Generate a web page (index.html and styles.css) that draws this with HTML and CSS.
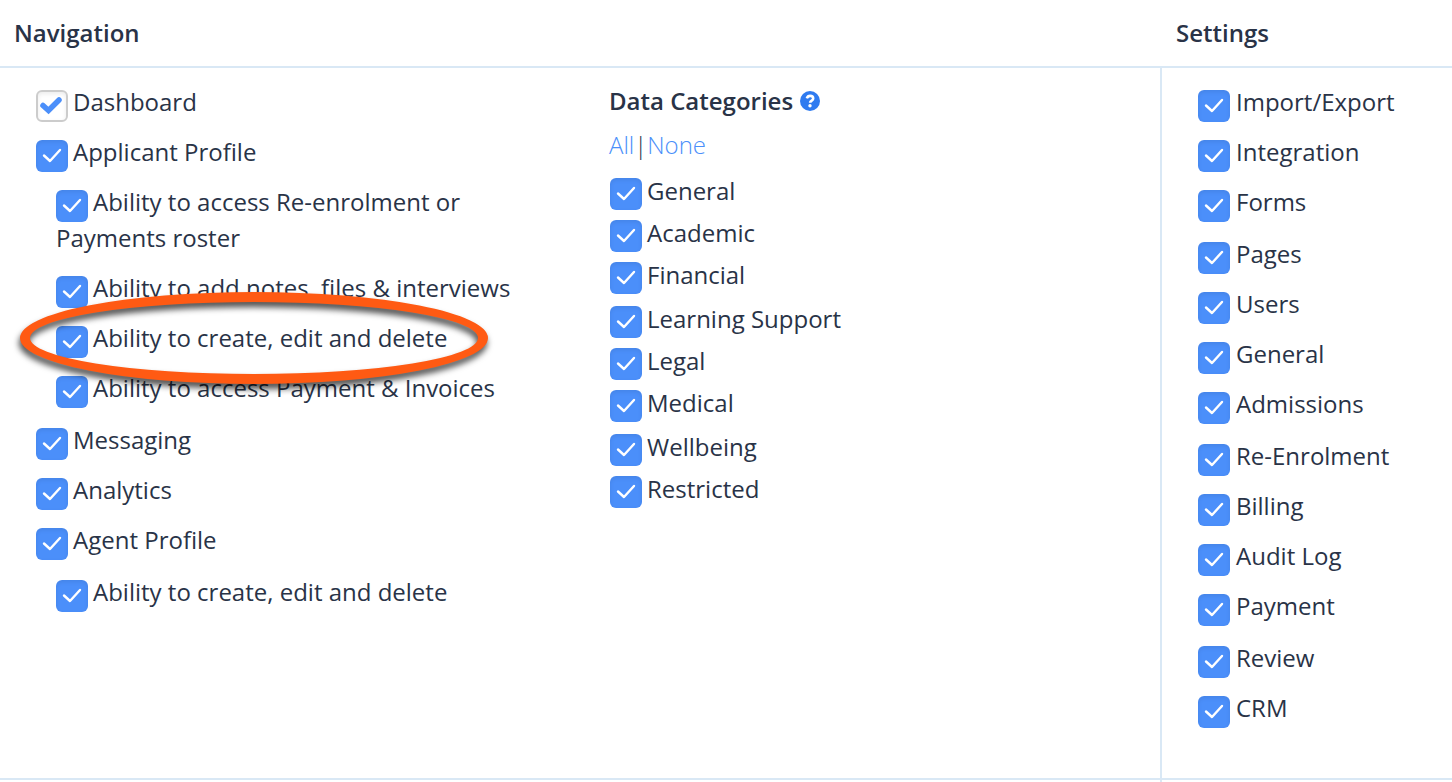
FILE: index.html
```html
<!DOCTYPE html>
<html lang="en">
<head>
<meta charset="utf-8">
<title>Permissions</title>
<link rel="stylesheet" href="styles.css">
</head>
<body>
<main class="permissions">
  <h2 class="heading">Navigation</h2>
  <h2 class="heading">Settings</h2>

  <div class="panel panel-split">
    <ul class="options options-nav">
      <li><label><input type="checkbox" class="check check-locked" checked>Dashboard</label></li>
      <li><label><input type="checkbox" class="check" checked>Applicant Profile</label></li>
      <li class="sub"><label><input type="checkbox" class="check" checked>Ability to access Re-enrolment or Payments roster</label></li>
      <li class="sub"><label><input type="checkbox" class="check" checked>Ability to add notes, files &amp; interviews</label></li>
      <li class="sub marked"><label><input type="checkbox" class="check" checked>Ability to create, edit and delete</label><span class="marker"></span></li>
      <li class="sub"><label><input type="checkbox" class="check" checked>Ability to access Payment &amp; Invoices</label></li>
      <li><label><input type="checkbox" class="check" checked>Messaging</label></li>
      <li><label><input type="checkbox" class="check" checked>Analytics</label></li>
      <li><label><input type="checkbox" class="check" checked>Agent Profile</label></li>
      <li class="sub"><label><input type="checkbox" class="check" checked>Ability to create, edit and delete</label></li>
    </ul>

    <section class="categories">
      <h3 class="categories-title">Data Categories
        <button type="button" class="help" aria-label="About data categories">
          <svg viewBox="0 0 20 20" width="20" height="20" aria-hidden="true">
            <circle cx="10" cy="10" r="10" fill="#2f7bf0"/>
            <path d="M6.800 7.400C7.400 5.600 8.600 4.900 10.100 4.900C11.900 4.900 13.200 6 13.200 7.500C13.200 9.600 10.100 9.600 10.100 11.800" fill="none" stroke="#fff" stroke-width="2.600"/>
            <circle cx="10" cy="14.700" r="1.700" fill="#fff"/>
          </svg>
        </button>
      </h3>
      <p class="bulk"><a href="#all">All</a><span class="bar">|</span><a href="#none">None</a></p>
      <ul class="options options-compact">
        <li><label><input type="checkbox" class="check" checked>General</label></li>
        <li><label><input type="checkbox" class="check" checked>Academic</label></li>
        <li><label><input type="checkbox" class="check" checked>Financial</label></li>
        <li><label><input type="checkbox" class="check" checked>Learning Support</label></li>
        <li><label><input type="checkbox" class="check" checked>Legal</label></li>
        <li><label><input type="checkbox" class="check" checked>Medical</label></li>
        <li><label><input type="checkbox" class="check" checked>Wellbeing</label></li>
        <li><label><input type="checkbox" class="check" checked>Restricted</label></li>
      </ul>
    </section>
  </div>

  <div class="panel panel-side">
    <ul class="options options-settings">
      <li><label><input type="checkbox" class="check" checked>Import/Export</label></li>
      <li><label><input type="checkbox" class="check" checked>Integration</label></li>
      <li><label><input type="checkbox" class="check" checked>Forms</label></li>
      <li><label><input type="checkbox" class="check" checked>Pages</label></li>
      <li><label><input type="checkbox" class="check" checked>Users</label></li>
      <li><label><input type="checkbox" class="check" checked>General</label></li>
      <li><label><input type="checkbox" class="check" checked>Admissions</label></li>
      <li><label><input type="checkbox" class="check" checked>Re-Enrolment</label></li>
      <li><label><input type="checkbox" class="check" checked>Billing</label></li>
      <li><label><input type="checkbox" class="check" checked>Audit Log</label></li>
      <li><label><input type="checkbox" class="check" checked>Payment</label></li>
      <li><label><input type="checkbox" class="check" checked>Review</label></li>
      <li><label><input type="checkbox" class="check" checked>CRM</label></li>
    </ul>
  </div>

  <div class="rest"></div>
  <div class="rest rest-side"></div>
</main>
</body>
</html>
```
FILE: styles.css
```css
* {
  box-sizing: border-box;
}

body {
  margin: 0;
  background: #fff;
  color: #293347;
  font: 24px/36px "Open Sans", "Noto Sans", sans-serif;
}

h2, h3, p, ul {
  margin: 0;
  padding: 0;
}

ul {
  list-style: none;
}

.permissions {
  display: grid;
  grid-template-columns: 1fr 292px;
  grid-template-rows: auto auto 1fr;
  min-height: 100vh;
}

.heading {
  padding: 15px 14px;
  border-bottom: 2px solid #d9e8f5;
  font-size: 24px;
  font-weight: 600;
}

.heading + .heading {
  padding-left: 16px;
}

.panel {
  padding-top: 15px;
  padding-bottom: 52px;
}

.panel-split {
  display: grid;
  grid-template-columns: 1fr 1fr;
}

.panel-side {
  padding-left: 36px;
}

.panel-side,
.rest-side {
  border-left: 2px solid #d9e8f5;
}

.rest {
  border-top: 2px solid #d9e8f5;
}

.options li {
  margin-bottom: 14px;
}

.options-nav {
  padding: 1px 30px 0 36px;
}

.options-settings {
  padding-top: 1px;
}

.options-nav .sub {
  padding-left: 20px;
}

.options-nav li:nth-child(3n+6),
.options-settings li:nth-child(4n+3) {
  margin-bottom: 16px;
}

.options-compact li {
  margin-bottom: 6px;
}

.options-compact li:nth-child(3n) {
  margin-bottom: 8px;
}

.options li:last-child {
  margin-bottom: 0;
}

.check {
  appearance: none;
  width: 32px;
  height: 32px;
  margin: -8px 5px -8px 0;
  vertical-align: -3px;
  border-radius: 6px;
  background: #4b8ffa url("data:image/svg+xml,%3Csvg xmlns='http://www.w3.org/2000/svg' viewBox='0 0 32 32'%3E%3Cpath d='M8 15.500L14 21L24 10' fill='none' stroke='white' stroke-width='2.400' stroke-linecap='round' stroke-linejoin='round'/%3E%3C/svg%3E") center / 32px 32px no-repeat;
  box-shadow: inset 0 2px 4px rgba(0, 0, 0, 0.08);
}

.check-locked {
  border: 2px solid #ccc;
  background: #fff url("data:image/svg+xml,%3Csvg xmlns='http://www.w3.org/2000/svg' viewBox='0 0 32 32'%3E%3Cpath d='M7 15.500L12.500 20.500L23 10' fill='none' stroke='%234b8ffa' stroke-width='5.500' stroke-linecap='round'/%3E%3C/svg%3E") center / 32px 32px no-repeat;
}

.options-settings .check {
  margin-right: 6px;
}

.options-compact .check {
  vertical-align: -2px;
}

.marked {
  position: relative;
}

/* Ring over the highlighted permission */
.marker {
  position: absolute;
  top: -28px;
  left: -36px;
  width: 468px;
  height: 92px;
  margin-left: 0;
  border: 10px solid #ff5a13;
  border-radius: 50%;
  filter: drop-shadow(-1px 5px 3px rgba(0, 0, 0, 0.7));
  pointer-events: none;
}

.options-nav .marker {
  left: -16px;
}

.categories {
  padding-left: 29px;
}

.categories .options {
  padding-left: 1px;
}

.categories-title {
  font-size: 24px;
  font-weight: 600;
}

.help {
  width: 20px;
  height: 20px;
  margin-left: 1px;
  padding: 0;
  border: 0;
  background: none;
  vertical-align: -1px;
  line-height: 0;
}

.bulk {
  margin: 8px 0 10px;
  font-weight: 300;
}

.bulk a {
  color: #4b8ffa;
  text-decoration: none;
}
```
